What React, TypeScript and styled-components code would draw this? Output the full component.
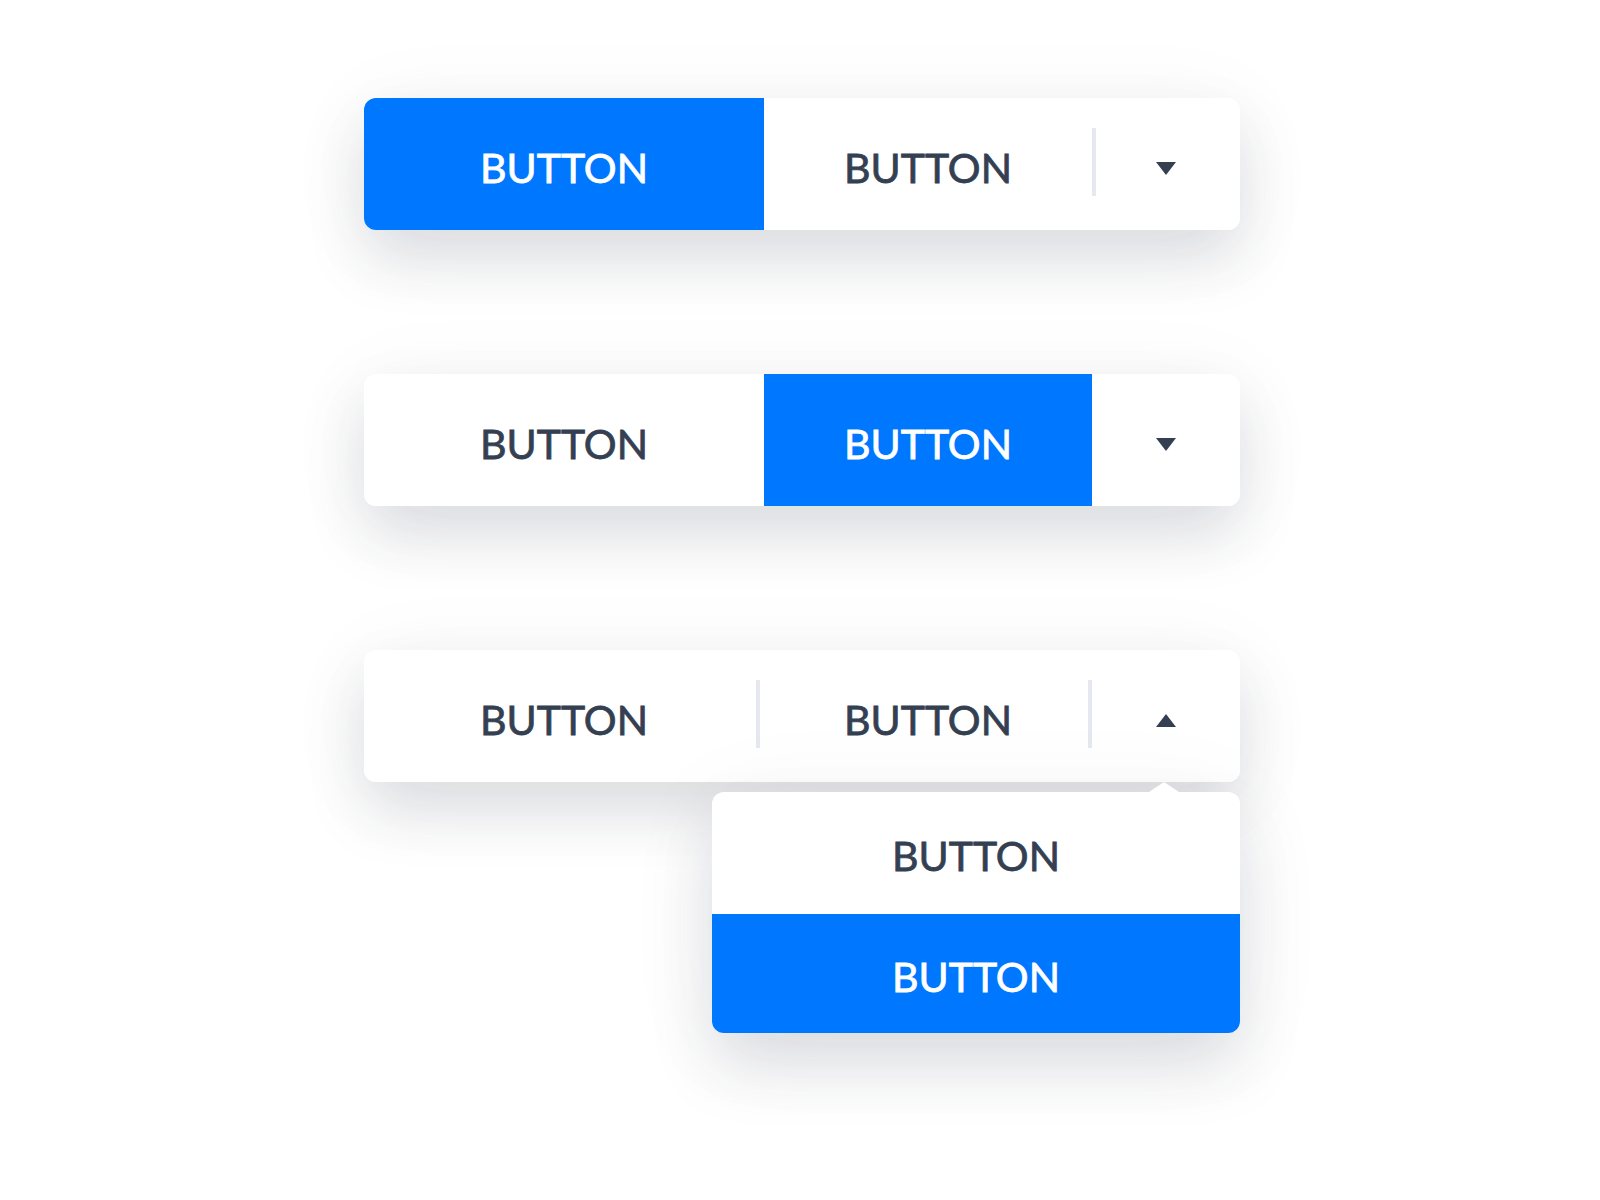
import React from 'react';
import styled, { createGlobalStyle } from 'styled-components';

const BLUE = '#0077ff';
const INK = '#343f52';

const GlobalStyle = createGlobalStyle`
  html, body {
    margin: 0;
    padding: 0;
    background: #ffffff;
  }
  body {
    font-family: Lato, "Open Sans", sans-serif;
    -webkit-font-smoothing: antialiased;
  }
`;

const Page = styled.div`
  box-sizing: border-box;
  min-height: 100vh;
  display: flex;
  flex-direction: column;
  gap: 144px;
  width: 1240px;
  padding: 98px 0 120px 364px;
`;

const SplitGroup = styled.div`
  display: flex;
  height: 132px;
  background: #ffffff;
  border-radius: 12px;
  overflow: hidden;
  box-shadow: 0 30px 60px rgba(30, 38, 60, 0.13), 0 10px 90px rgba(30, 38, 60, 0.05);
`;

const Segment = styled.button<{ $width: number; $active?: boolean; $divider?: number }>`
  position: relative;
  flex: 0 0 ${(p) => p.$width}px;
  display: flex;
  align-items: center;
  justify-content: center;
  padding: 6px 0 0;
  border: none;
  background: ${(p) => (p.$active ? BLUE : '#ffffff')};
  color: ${(p) => (p.$active ? '#ffffff' : INK)};
  font-family: Lato, "Open Sans", sans-serif;
  font-size: 41px;
  font-weight: 400;
  -webkit-text-stroke: 0.8px currentColor;
  letter-spacing: 0;
  cursor: pointer;

  ${(p) =>
    p.$divider !== undefined &&
    `
    &::before {
      content: '';
      position: absolute;
      top: 30px;
      bottom: 34px;
      left: ${p.$divider}px;
      width: 4px;
      background: #e5e8ef;
    }
  `}
`;

const CaretSegment = styled(Segment)`
  padding-top: 8px;
`;

const Caret = ({ up }: { up?: boolean }) => (
  <svg width="20" height="13" viewBox="0 0 20 13">
    <polygon points={up ? '10,0 20,13 0,13' : '0,0 20,0 10,13'} fill={INK} />
  </svg>
);

const MenuWrap = styled.div`
  display: flex;
  flex-direction: column;
`;

const Dropdown = styled.div`
  position: relative;
  align-self: flex-end;
  width: 528px;
  margin-top: 10px;
  display: flex;
  flex-direction: column;
  border-radius: 12px;
  box-shadow: 0 34px 64px rgba(30, 38, 60, 0.13), 0 10px 100px rgba(30, 38, 60, 0.05);

  &::before {
    content: '';
    position: absolute;
    top: -10px;
    right: 61px;
    border-left: 15px solid transparent;
    border-right: 15px solid transparent;
    border-bottom: 10px solid #ffffff;
  }
`;

const MenuItem = styled.button<{ $active?: boolean; $height: number }>`
  height: ${(p) => p.$height}px;
  display: flex;
  align-items: center;
  justify-content: center;
  padding: 5px 0 0;
  border: none;
  background: ${(p) => (p.$active ? BLUE : '#ffffff')};
  color: ${(p) => (p.$active ? '#ffffff' : INK)};
  font-family: Lato, "Open Sans", sans-serif;
  font-size: 41px;
  font-weight: 400;
  -webkit-text-stroke: 0.8px currentColor;
  letter-spacing: 0;
  cursor: pointer;

  &:first-child {
    border-radius: 12px 12px 0 0;
  }
  &:last-child {
    border-radius: 0 0 12px 12px;
  }
`;

export default function App() {
  return (
    <>
      <GlobalStyle />
      <Page>
        <SplitGroup>
          <Segment $width={400} $active>BUTTON</Segment>
          <Segment $width={328}>BUTTON</Segment>
          <CaretSegment $width={148} $divider={0}><Caret /></CaretSegment>
        </SplitGroup>

        <SplitGroup>
          <Segment $width={400}>BUTTON</Segment>
          <Segment $width={328} $active>BUTTON</Segment>
          <CaretSegment $width={148}><Caret /></CaretSegment>
        </SplitGroup>

        <MenuWrap>
          <SplitGroup>
            <Segment $width={400}>BUTTON</Segment>
            <Segment $width={328} $divider={-8}>BUTTON</Segment>
            <CaretSegment $width={148} $divider={-4}><Caret up /></CaretSegment>
          </SplitGroup>
          <Dropdown>
            <MenuItem $height={122}>BUTTON</MenuItem>
            <MenuItem $height={119} $active>BUTTON</MenuItem>
          </Dropdown>
        </MenuWrap>
      </Page>
    </>
  );
}
